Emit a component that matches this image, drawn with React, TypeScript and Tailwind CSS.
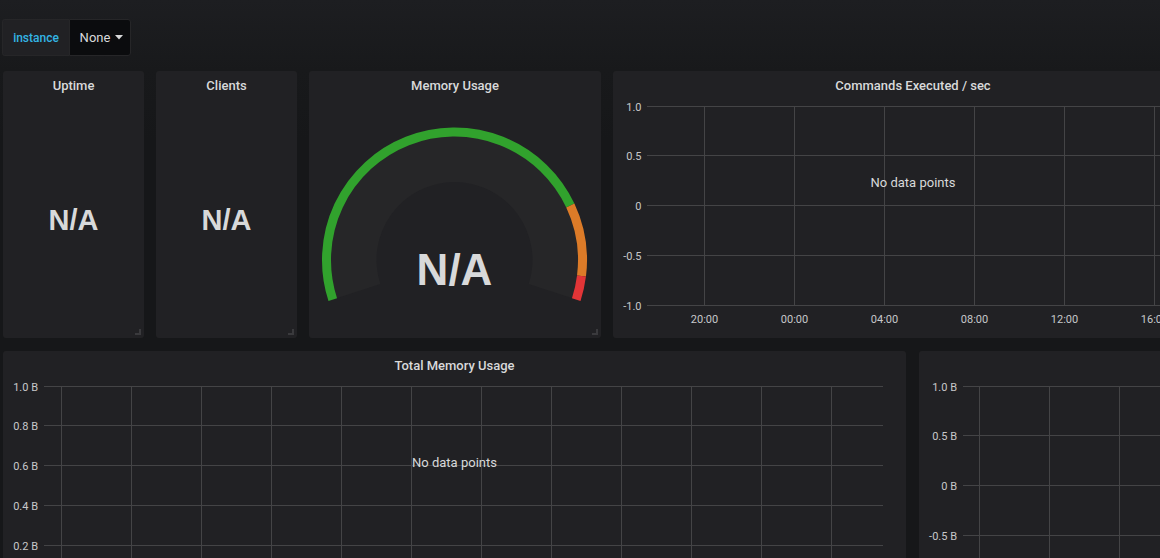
import React from "react";

const TICK = "#c7c8ca";
const GRID = "#444446";

function Handle() {
  return (
    <div className="absolute right-[3px] bottom-[3px] w-[6px] h-[6px] border-r-2 border-b-2 border-[#3a3a3d]" />
  );
}

function Panel({
  title,
  className,
  children,
}: {
  title?: string;
  className: string;
  children?: React.ReactNode;
}) {
  return (
    <div className={"relative shrink-0 rounded-[3px] bg-[#212124] flex flex-col " + className}>
      <div className="h-[29px] shrink-0 flex items-center justify-center text-[13px] font-medium text-[#d8d9da] leading-none">
        {title}
      </div>
      {children}
      <Handle />
    </div>
  );
}

function Stat() {
  return (
    <div className="flex-1 flex items-center justify-center pt-[3px]">
      <span className="font-['Liberation_Sans',Arial,sans-serif] font-bold text-[29px] text-[#d8d9da] leading-none">
        N/A
      </span>
    </div>
  );
}

function pol(cx: number, cy: number, r: number, deg: number): [number, number] {
  const a = (deg * Math.PI) / 180;
  return [cx + r * Math.cos(a), cy + r * Math.sin(a)];
}

function arc(cx: number, cy: number, r: number, a0: number, a1: number) {
  const [x0, y0] = pol(cx, cy, r, a0);
  const [x1, y1] = pol(cx, cy, r, a1);
  const large = a1 - a0 > 180 ? 1 : 0;
  return `M ${x0} ${y0} A ${r} ${r} 0 ${large} 1 ${x1} ${y1}`;
}

function sector(cx: number, cy: number, ri: number, ro: number, a0: number, a1: number) {
  const [ox0, oy0] = pol(cx, cy, ro, a0);
  const [ox1, oy1] = pol(cx, cy, ro, a1);
  const [ix0, iy0] = pol(cx, cy, ri, a0);
  const [ix1, iy1] = pol(cx, cy, ri, a1);
  const large = a1 - a0 > 180 ? 1 : 0;
  return `M ${ox0} ${oy0} A ${ro} ${ro} 0 ${large} 1 ${ox1} ${oy1} L ${ix1} ${iy1} A ${ri} ${ri} 0 ${large} 0 ${ix0} ${iy0} Z`;
}

function Gauge() {
  const cx = 145.5;
  const cy = 160;
  const start = 162;
  const sweep = 216;
  const at = (f: number) => start + sweep * f;
  const rBand = 128;
  return (
    <svg width="292" height="238" className="block">
      <path d={sector(cx, cy, 78, 124, at(0), at(1))} fill="#262628" />
      <path d={arc(cx, cy, rBand, at(0), at(0.8))} stroke="#31a22d" strokeWidth="9" fill="none" />
      <path d={arc(cx, cy, rBand, at(0.8), at(0.95))} stroke="#dc7b28" strokeWidth="9" fill="none" />
      <path d={arc(cx, cy, rBand, at(0.95), at(1))} stroke="#e23537" strokeWidth="9" fill="none" />
      <text
        x={cx}
        y={185}
        textAnchor="middle"
        fontFamily="'Liberation Sans', Arial, sans-serif"
        fontWeight="bold"
        fontSize="44"
        fill="#d8d9da"
      >
        N/A
      </text>
    </svg>
  );
}

type GraphProps = {
  width: number;
  height: number;
  gridLeft: number;
  gridRight: number;
  labelRight: number;
  yLines: number[];
  yLabels: string[];
  xLines: number[];
  xLabels?: string[];
  xLabelY?: number;
  noData?: [number, number];
};

function Graph(p: GraphProps) {
  return (
    <svg width={p.width} height={p.height} className="block">
      {p.yLines.map((y, i) => (
        <g key={"y" + i}>
          <line x1={p.gridLeft} x2={p.gridRight} y1={y} y2={y} stroke={GRID} strokeWidth="1" />
          <text
            x={p.labelRight}
            y={y + 4}
            textAnchor="end"
            fontFamily="Roboto, sans-serif"
            fontSize="11"
            fill={TICK}
          >
            {p.yLabels[i]}
          </text>
        </g>
      ))}
      {p.xLines.map((x, i) => (
        <g key={"x" + i}>
          <line
            x1={x}
            x2={x}
            y1={p.yLines[0]}
            y2={p.yLines[p.yLines.length - 1]}
            stroke={GRID}
            strokeWidth="1"
          />
          {p.xLabels && p.xLabels[i] && (
            <text
              x={x}
              y={p.xLabelY}
              textAnchor="middle"
              fontFamily="Roboto, sans-serif"
              fontSize="11"
              fill={TICK}
            >
              {p.xLabels[i]}
            </text>
          )}
        </g>
      ))}
      {p.noData && (
        <text
          x={p.noData[0]}
          y={p.noData[1] + 4.5}
          textAnchor="middle"
          fontFamily="Roboto, sans-serif"
          fontSize="13"
          fill="#d8d9da"
        >
          No data points
        </text>
      )}
    </svg>
  );
}

export default function App() {
  const cmdY = [6.5, 55.5, 105.5, 155.5, 205.5];
  const cmdX = [91.5, 181.5, 271.5, 361.5, 451.5, 541.5];
  const memY = [6.5, 45.5, 85.5, 125.5, 165.5, 205.5];
  const memX = Array.from({ length: 12 }, (_, i) => 58.5 + 70 * i);
  const lastY = [6.5, 55.5, 105.5, 155.5, 204.5];
  const lastX = [60.5, 130.5, 200.5, 270.5, 340.5, 410.5, 480.5, 550.5];

  return (
    <div className="w-[1160px] h-[558px] overflow-hidden bg-[linear-gradient(180deg,#1d1e21_0px,#18191b_70px,#161719_140px)] font-['Roboto',sans-serif]">
      <div className="pt-[19px] pl-[2px] flex">
        <div className="h-[37px] w-[67px] flex items-center justify-center rounded-l-[3px] bg-[#212124] border border-[#262628] border-r-0 text-[12px] font-medium text-[#33b5e5]">
          instance
        </div>
        <div className="h-[37px] w-[62px] flex items-center justify-center gap-[5px] pl-[3px] rounded-r-[3px] bg-[#0b0c0e] border border-[#262628] text-[13px] text-[#d8d9da]">
          <span>None</span>
          <svg width="8" height="5" viewBox="0 0 8 5">
            <path d="M0 0 L8 0 L4 4.5 Z" fill="#d8d9da" />
          </svg>
        </div>
      </div>

      <div className="mt-[15px] pl-[3px] flex gap-3 h-[267px]">
        <Panel title="Uptime" className="w-[141px] h-full">
          <Stat />
        </Panel>
        <Panel title="Clients" className="w-[141px] h-full">
          <Stat />
        </Panel>
        <Panel title="Memory Usage" className="w-[292px] h-full">
          <Gauge />
        </Panel>
        <Panel title="Commands Executed / sec" className="w-[600px] h-full">
          <Graph
            width={600}
            height={238}
            gridLeft={34}
            gridRight={577}
            labelRight={28.5}
            yLines={cmdY}
            yLabels={["1.0", "0.5", "0", "-0.5", "-1.0"]}
            xLines={cmdX}
            xLabels={["20:00", "00:00", "04:00", "08:00", "12:00", "16:00"]}
            xLabelY={223}
            noData={[300, 82]}
          />
        </Panel>
      </div>

      <div className="mt-[13px] pl-[3px] flex gap-[13px] h-[300px]">
        <Panel title="Total Memory Usage" className="w-[903px] h-full">
          <Graph
            width={903}
            height={271}
            gridLeft={41}
            gridRight={880}
            labelRight={35}
            yLines={memY}
            yLabels={["1.0 B", "0.8 B", "0.6 B", "0.4 B", "0.2 B", "0 B"]}
            xLines={memX}
            noData={[451.5, 82]}
          />
        </Panel>
        <Panel title="" className="w-[600px] h-full">
          <Graph
            width={600}
            height={271}
            gridLeft={44}
            gridRight={577}
            labelRight={38}
            yLines={lastY}
            yLabels={["1.0 B", "0.5 B", "0 B", "-0.5 B", "-1.0 B"]}
            xLines={lastX}
          />
        </Panel>
      </div>
    </div>
  );
}
